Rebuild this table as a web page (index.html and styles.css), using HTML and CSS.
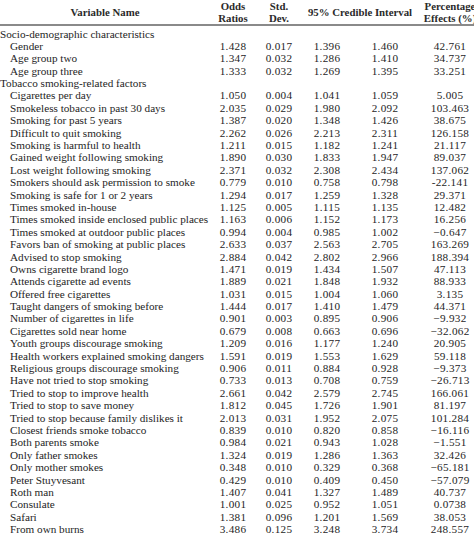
FILE: index.html
```html
<!DOCTYPE html>
<html>
<head>
<meta charset="utf-8">
<link rel="stylesheet" href="styles.css">
</head>
<body>
<div class="tbl">
  <div class="head">
    <div class="h name">Variable Name</div>
    <div class="h">Odds<br>Ratios</div>
    <div class="h">Std.<br>Dev.</div>
    <div class="h ci">95% Credible Interval</div>
    <div class="h pct">Percentage<br>Effects (%)</div>
  </div>
  <div class="body">
    <div class="row sec"><div class="v">Socio-demographic characteristics</div></div>
    <div class="row"><div class="v">Gender</div><div>1.428</div><div>0.017</div><div>1.396</div><div>1.460</div><div>42.761</div></div>
    <div class="row"><div class="v">Age group two</div><div>1.347</div><div>0.032</div><div>1.286</div><div>1.410</div><div>34.737</div></div>
    <div class="row"><div class="v">Age group three</div><div>1.333</div><div>0.032</div><div>1.269</div><div>1.395</div><div>33.251</div></div>
    <div class="row sec"><div class="v">Tobacco smoking-related factors</div></div>
    <div class="row"><div class="v">Cigarettes per day</div><div>1.050</div><div>0.004</div><div>1.041</div><div>1.059</div><div>5.005</div></div>
    <div class="row"><div class="v">Smokeless tobacco in past 30 days</div><div>2.035</div><div>0.029</div><div>1.980</div><div>2.092</div><div>103.463</div></div>
    <div class="row"><div class="v">Smoking for past 5 years</div><div>1.387</div><div>0.020</div><div>1.348</div><div>1.426</div><div>38.675</div></div>
    <div class="row"><div class="v">Difficult to quit smoking</div><div>2.262</div><div>0.026</div><div>2.213</div><div>2.311</div><div>126.158</div></div>
    <div class="row"><div class="v">Smoking is harmful to health</div><div>1.211</div><div>0.015</div><div>1.182</div><div>1.241</div><div>21.117</div></div>
    <div class="row"><div class="v">Gained weight following smoking</div><div>1.890</div><div>0.030</div><div>1.833</div><div>1.947</div><div>89.037</div></div>
    <div class="row"><div class="v">Lost weight following smoking</div><div>2.371</div><div>0.032</div><div>2.308</div><div>2.434</div><div>137.062</div></div>
    <div class="row"><div class="v">Smokers should ask permission to smoke</div><div>0.779</div><div>0.010</div><div>0.758</div><div>0.798</div><div>-22.141</div></div>
    <div class="row"><div class="v">Smoking is safe for 1 or 2 years</div><div>1.294</div><div>0.017</div><div>1.259</div><div>1.328</div><div>29.371</div></div>
    <div class="row"><div class="v">Times smoked in-house</div><div>1.125</div><div>0.005</div><div>1.115</div><div>1.135</div><div>12.482</div></div>
    <div class="row"><div class="v">Times smoked inside enclosed public places</div><div>1.163</div><div>0.006</div><div>1.152</div><div>1.173</div><div>16.256</div></div>
    <div class="row"><div class="v">Times smoked at outdoor public places</div><div>0.994</div><div>0.004</div><div>0.985</div><div>1.002</div><div>−0.647</div></div>
    <div class="row"><div class="v">Favors ban of smoking at public places</div><div>2.633</div><div>0.037</div><div>2.563</div><div>2.705</div><div>163.269</div></div>
    <div class="row"><div class="v">Advised to stop smoking</div><div>2.884</div><div>0.042</div><div>2.802</div><div>2.966</div><div>188.394</div></div>
    <div class="row"><div class="v">Owns cigarette brand logo</div><div>1.471</div><div>0.019</div><div>1.434</div><div>1.507</div><div>47.113</div></div>
    <div class="row"><div class="v">Attends cigarette ad events</div><div>1.889</div><div>0.021</div><div>1.848</div><div>1.932</div><div>88.933</div></div>
    <div class="row"><div class="v">Offered free cigarettes</div><div>1.031</div><div>0.015</div><div>1.004</div><div>1.060</div><div>3.135</div></div>
    <div class="row"><div class="v">Taught dangers of smoking before</div><div>1.444</div><div>0.017</div><div>1.410</div><div>1.479</div><div>44.371</div></div>
    <div class="row"><div class="v">Number of cigarettes in life</div><div>0.901</div><div>0.003</div><div>0.895</div><div>0.906</div><div>−9.932</div></div>
    <div class="row"><div class="v">Cigarettes sold near home</div><div>0.679</div><div>0.008</div><div>0.663</div><div>0.696</div><div>−32.062</div></div>
    <div class="row"><div class="v">Youth groups discourage smoking</div><div>1.209</div><div>0.016</div><div>1.177</div><div>1.240</div><div>20.905</div></div>
    <div class="row"><div class="v">Health workers explained smoking dangers</div><div>1.591</div><div>0.019</div><div>1.553</div><div>1.629</div><div>59.118</div></div>
    <div class="row"><div class="v">Religious groups discourage smoking</div><div>0.906</div><div>0.011</div><div>0.884</div><div>0.928</div><div>−9.373</div></div>
    <div class="row"><div class="v">Have not tried to stop smoking</div><div>0.733</div><div>0.013</div><div>0.708</div><div>0.759</div><div>−26.713</div></div>
    <div class="row"><div class="v">Tried to stop to improve health</div><div>2.661</div><div>0.042</div><div>2.579</div><div>2.745</div><div>166.061</div></div>
    <div class="row"><div class="v">Tried to stop to save money</div><div>1.812</div><div>0.045</div><div>1.726</div><div>1.901</div><div>81.197</div></div>
    <div class="row"><div class="v">Tried to stop because family dislikes it</div><div>2.013</div><div>0.031</div><div>1.952</div><div>2.075</div><div>101.284</div></div>
    <div class="row"><div class="v">Closest friends smoke tobacco</div><div>0.839</div><div>0.010</div><div>0.820</div><div>0.858</div><div>−16.116</div></div>
    <div class="row"><div class="v">Both parents smoke</div><div>0.984</div><div>0.021</div><div>0.943</div><div>1.028</div><div>−1.551</div></div>
    <div class="row"><div class="v">Only father smokes</div><div>1.324</div><div>0.019</div><div>1.286</div><div>1.363</div><div>32.426</div></div>
    <div class="row"><div class="v">Only mother smokes</div><div>0.348</div><div>0.010</div><div>0.329</div><div>0.368</div><div>−65.181</div></div>
    <div class="row"><div class="v">Peter Stuyvesant</div><div>0.429</div><div>0.010</div><div>0.409</div><div>0.450</div><div>−57.079</div></div>
    <div class="row"><div class="v">Roth man</div><div>1.407</div><div>0.041</div><div>1.327</div><div>1.489</div><div>40.737</div></div>
    <div class="row"><div class="v">Consulate</div><div>1.001</div><div>0.025</div><div>0.952</div><div>1.051</div><div>0.0738</div></div>
    <div class="row"><div class="v">Safari</div><div>1.381</div><div>0.096</div><div>1.201</div><div>1.569</div><div>38.053</div></div>
    <div class="row"><div class="v">From own burns</div><div>3.486</div><div>0.125</div><div>3.248</div><div>3.734</div><div>248.557</div></div>
  </div>
</div>
</body>
</html>
```

FILE: styles.css
```css
html, body {
  margin: 0;
  padding: 0;
  background: #fff;
  overflow: hidden;
}
body {
  width: 474px;
  height: 536px;
  font-family: "Liberation Serif", serif;
  font-size: 11.2px;
  color: #1e1e1e;
}
.tbl {
  width: 474px;
  overflow: hidden;
}
.head {
  display: grid;
  grid-template-columns: 210px 46px 46px 116px 64px;
  height: 24px;
  margin-top: -0.5px;
  border-bottom: 2px solid #8a8a8a;
  font-weight: bold;
  font-size: 10.8px;
  line-height: 12px;
  color: #2a2a2a;
}
.h {
  display: flex;
  align-items: center;
  justify-content: center;
  text-align: center;
  white-space: nowrap;
}
.body {
  padding-top: 2px;
}
.row {
  display: grid;
  grid-template-columns: 210px 46px 46px 50px 66px 64px;
  height: 12.4px;
  line-height: 12.4px;
  white-space: nowrap;
}
.row > div {
  text-align: center;
  letter-spacing: 0.3px;
}
.row > .v {
  text-align: left;
  padding-left: 10px;
  letter-spacing: 0;
}
.sec > .v {
  padding-left: 0;
  grid-column: 1 / 4;
}
```
